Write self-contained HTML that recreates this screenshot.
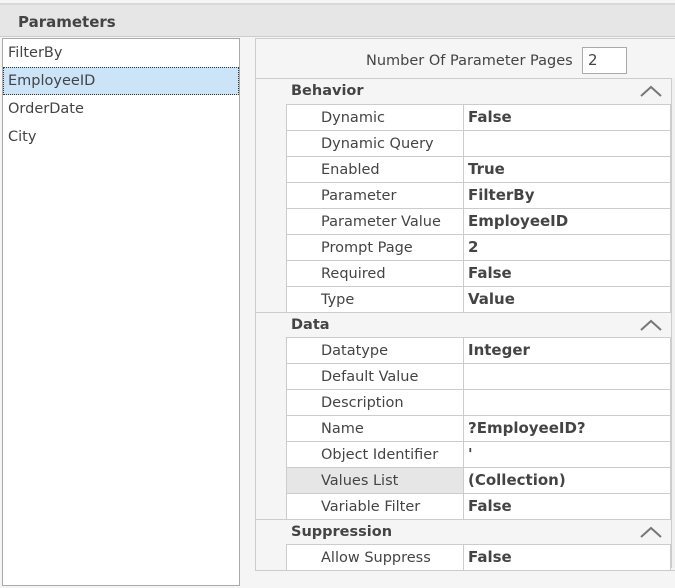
<!DOCTYPE html>
<html><head><style>
*{margin:0;padding:0;box-sizing:border-box}
body{width:675px;height:588px;background:#f5f5f5;font-family:"DejaVu Sans","Liberation Sans",sans-serif;font-size:15px;color:#444;position:relative;overflow:hidden}
.hdr{position:absolute;left:0;top:3px;width:675px;height:34px;background:#e6e6e6;border-top:2px solid #d8d8d8;border-bottom:1px solid #ccc}
.hdr span{position:absolute;left:18px;top:8px;font-weight:bold;font-size:15px;color:#444}
.list{position:absolute;left:2px;top:38px;width:238px;height:548px;background:#fff;border:1px solid #aaa}
.list div{height:28px;line-height:28px;padding-left:5px;font-size:14.5px}
.list .sel{background:#cce4f7;border:1px dotted #333;line-height:26px;padding-left:4px}
.rp{position:absolute;left:255px;top:38px;width:425px;height:533px;border:1px solid #ccc;border-right:none;background:#f5f5f5}
.np{position:absolute;left:110px;top:14px;font-size:14.5px}
.npbox{position:absolute;left:326px;top:8px;width:45px;height:27px;border:1px solid #aaa;background:#fff;padding-left:5px;line-height:25px}
.grid{position:absolute;left:0;top:39px;width:415px;border-top:1px solid #ccc}
.g{height:25px;position:relative;}
.g b{position:absolute;left:35px;top:4px;font-size:14.5px;color:#444}
.g svg{position:absolute;left:384px;top:6px}
.r{height:26px;margin-left:30px;width:385px;position:relative;background:#fff;border-top:1px solid #ccc;border-left:1px solid #ccc;border-right:1px solid #ccc}
.r .l{position:absolute;left:34px;top:5px;font-size:14.5px}
.r .v{position:absolute;left:176px;top:0;height:25px;border-left:1px solid #ccc;padding-left:4px;line-height:24px;font-weight:bold;width:209px}
.r.last{border-bottom:1px solid #ccc;height:27px}
.sb{position:absolute;left:671px;top:78px;width:4px;height:490px;border-left:1px solid #ccc;background:#f0f0f0}
</style></head><body>
<div class="hdr"><span>Parameters</span></div>
<div class="list">
<div>FilterBy</div><div class="sel">EmployeeID</div><div>OrderDate</div><div>City</div>
</div>
<div class="rp">
<div class="np">Number Of Parameter Pages</div>
<div class="npbox">2</div>
<div class="grid">
<div class="g"><b>Behavior</b><svg width="22" height="12"><path d="M1 11 L11 2 L21 11" fill="none" stroke="#777" stroke-width="2"/></svg></div>
<div class="r"><span class="l">Dynamic</span><span class="v">False</span></div>
<div class="r"><span class="l">Dynamic Query</span><span class="v"></span></div>
<div class="r"><span class="l">Enabled</span><span class="v">True</span></div>
<div class="r"><span class="l">Parameter</span><span class="v">FilterBy</span></div>
<div class="r"><span class="l">Parameter Value</span><span class="v">EmployeeID</span></div>
<div class="r"><span class="l">Prompt Page</span><span class="v">2</span></div>
<div class="r"><span class="l">Required</span><span class="v">False</span></div>
<div class="r"><span class="l">Type</span><span class="v">Value</span></div>
<div class="g" style="border-top:1px solid #ccc"><b>Data</b><svg width="22" height="12"><path d="M1 11 L11 2 L21 11" fill="none" stroke="#777" stroke-width="2"/></svg></div>
<div class="r"><span class="l">Datatype</span><span class="v">Integer</span></div>
<div class="r"><span class="l">Default Value</span><span class="v"></span></div>
<div class="r"><span class="l">Description</span><span class="v"></span></div>
<div class="r"><span class="l">Name</span><span class="v">?EmployeeID?</span></div>
<div class="r"><span class="l">Object Identifier</span><span class="v">'</span></div>
<div class="r" style="background:linear-gradient(90deg,#e6e6e6 176px,#fff 176px)"><span class="l">Values List</span><span class="v">(Collection)</span></div>
<div class="r"><span class="l">Variable Filter</span><span class="v">False</span></div>
<div class="g" style="border-top:1px solid #ccc"><b>Suppression</b><svg width="22" height="12"><path d="M1 11 L11 2 L21 11" fill="none" stroke="#777" stroke-width="2"/></svg></div>
<div class="r last"><span class="l">Allow Suppress</span><span class="v">False</span></div>
</div>
</div>
<div class="sb"></div>
</body></html>
